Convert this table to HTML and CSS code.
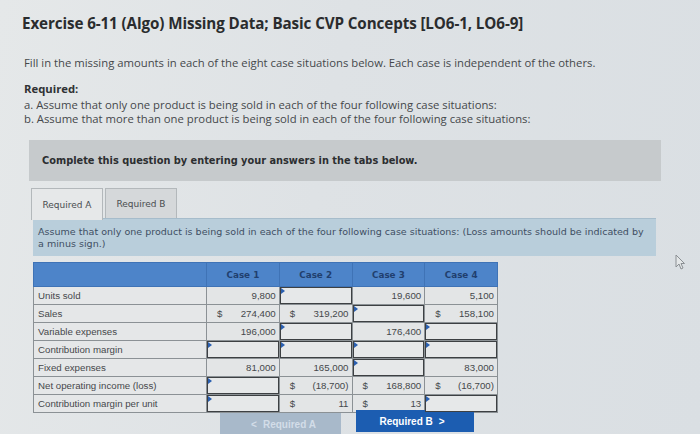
FILE: index.html
```
<!DOCTYPE html>
<html>
<head>
<meta charset="utf-8">
<link rel="stylesheet" href="styles.css">
</head>
<body>
<div class="page">
  <h1 class="title">Exercise 6-11 (Algo) Missing Data; Basic CVP Concepts [LO6-1, LO6-9]</h1>
  <p class="intro">Fill in the missing amounts in each of the eight case situations below. Each case is independent of the others.</p>
  <div class="req">
    <div class="req-h">Required:</div>
    <div class="req-l">a. Assume that only one product is being sold in each of the four following case situations:</div>
    <div class="req-l">b. Assume that more than one product is being sold in each of the four following case situations:</div>
  </div>
  <div class="banner">Complete this question by entering your answers in the tabs below.</div>
  <div class="tabs">
    <div class="tab active">Required A</div>
    <div class="tab">Required B</div>
  </div>
  <div class="instr">Assume that only one product is being sold in each of the four following case situations: (Loss amounts should be indicated by a minus sign.)</div>
  <table class="grid">
    <colgroup><col class="c-label"><col class="c-case"><col class="c-case"><col class="c-case"><col class="c-case"></colgroup>
    <thead>
      <tr><th></th><th>Case 1</th><th>Case 2</th><th>Case 3</th><th>Case 4</th></tr>
    </thead>
    <tbody>
      <tr><td class="lbl">Units sold</td><td class="val"><span class="num">9,800</span></td><td class="inp"><span class="box"></span></td><td class="val"><span class="num">19,600</span></td><td class="val"><span class="num">5,100</span></td></tr>
      <tr><td class="lbl">Sales</td><td class="val"><span class="cur">$</span><span class="num">274,400</span></td><td class="val"><span class="cur">$</span><span class="num">319,200</span></td><td class="inp"><span class="box"></span></td><td class="val"><span class="cur">$</span><span class="num">158,100</span></td></tr>
      <tr><td class="lbl">Variable expenses</td><td class="val"><span class="num">196,000</span></td><td class="inp"><span class="box"></span></td><td class="val"><span class="num">176,400</span></td><td class="inp"><span class="box"></span></td></tr>
      <tr><td class="lbl">Contribution margin</td><td class="inp"><span class="box"></span></td><td class="inp"><span class="box"></span></td><td class="inp"><span class="box"></span></td><td class="inp"><span class="box"></span></td></tr>
      <tr><td class="lbl">Fixed expenses</td><td class="val"><span class="num">81,000</span></td><td class="val"><span class="num">165,000</span></td><td class="inp"><span class="box"></span></td><td class="val"><span class="num">83,000</span></td></tr>
      <tr><td class="lbl">Net operating income (loss)</td><td class="inp"><span class="box"></span></td><td class="val"><span class="cur">$</span><span class="num">(18,700)</span></td><td class="val"><span class="cur">$</span><span class="num">168,800</span></td><td class="val"><span class="cur">$</span><span class="num">(16,700)</span></td></tr>
      <tr><td class="lbl">Contribution margin per unit</td><td class="inp"><span class="box"></span></td><td class="val"><span class="cur">$</span><span class="num">11</span></td><td class="val"><span class="cur">$</span><span class="num">13</span></td><td class="inp"><span class="box"></span></td></tr>
    </tbody>
  </table>
  <div class="nav">
    <div class="btn prev"><span class="chev">&lt;</span> Required A</div>
    <div class="btn next">Required B <span class="chev">&gt;</span></div>
  </div>
  <svg class="cursor" width="10" height="16" viewBox="0 0 10 16"><path d="M1 1 L1 13 L4 10 L6 15 L8 14 L6 9.5 L9.5 9.5 Z" fill="#e4e7e8" stroke="#8a8f93" stroke-width="1"/></svg>
</div>
</body>
</html>
```
FILE: styles.css
```
* { box-sizing: border-box; }
html, body { margin: 0; padding: 0; }
body {
  width: 700px;
  height: 434px;
  overflow: hidden;
  background: linear-gradient(100deg, #e5e8e9 0%, #dee2e5 45%, #dadfe3 100%);
  font-family: "Open Sans", "Liberation Sans", sans-serif;
  color: #3a3d40;
}
.page {
  position: relative;
  height: 434px;
  padding: 13px 0 0 22px;
}
.title {
  margin: 0;
  font-size: 15.2px;
  line-height: 20px;
  font-weight: 700;
  color: #2a2c2e;
  letter-spacing: -0.1px;
}
.intro {
  margin: 23px 0 0 2px;
  font-size: 11.3px;
  line-height: 14px;
  color: #45484b;
}
.req {
  margin: 12px 0 0 2px;
  font-size: 11.3px;
  color: #45484b;
}
.req-h {
  font-weight: 700;
  color: #303234;
  line-height: 14px;
  margin-bottom: 2px;
}
.req-l {
  line-height: 13.5px;
}
.banner {
  margin: 15px 0 0 7px;
  width: 632px;
  height: 41px;
  background: #c6cacc;
  padding: 0 0 0 13px;
  display: flex;
  align-items: center;
  font-family: "DejaVu Sans", sans-serif;
  font-weight: 700;
  font-size: 9.8px;
  color: #2c2e30;
}
.tabs {
  display: flex;
  gap: 2px;
  margin: 7px 0 0 9px;
}
.tab {
  width: 72px;
  height: 30px;
  border: 1px solid #b3b8bb;
  border-bottom: none;
  background: #d5d8da;
  font-family: "DejaVu Sans", sans-serif;
  font-size: 9px;
  color: #4a4d50;
  display: flex;
  align-items: center;
  justify-content: center;
}
.tab.active {
  background: #e6e8e9;
  height: 32px;
  margin-bottom: -2px;
}
.instr {
  margin: 0 0 0 11px;
  width: 623px;
  background: #b9cedb;
  border-top: 1px solid #a6bccb;
  padding: 7px 10px 7px 5px;
  font-family: "DejaVu Sans", sans-serif;
  font-size: 9.55px;
  line-height: 11.5px;
  color: #3f4f63;
}
.grid {
  margin: 6px 0 0 11px;
  border-collapse: collapse;
  table-layout: fixed;
  width: 464px;
  font-family: "Liberation Sans", Arial, sans-serif;
  font-size: 9.7px;
  color: #45484b;
}
.c-label { width: 173px; }
.c-case { width: 72.75px; }
.grid th {
  height: 24px;
  background: #4d84c9;
  border: 1px solid #3f73b6;
  font-family: "DejaVu Sans", sans-serif;
  font-weight: 700;
  font-size: 8.8px;
  color: #213f6e;
  text-align: center;
  padding: 0;
}
.grid td {
  height: 17.85px;
  border: 1px solid #8b9195;
  background: #e3e5e6;
  padding: 0;
}
.grid td.lbl {
  padding-left: 4px;
  background: #e5e7e8;
}
.grid td.val {
  padding: 0 3px 0 10px;
}
.val {
  white-space: nowrap;
}
.val .cur { float: left; }
.val .num { float: right; }
.grid td.inp {
  padding: 0;
}
.box {
  position: relative;
  display: block;
  height: 17px;
  border: 1.5px solid #3d4043;
  background: #e6e8e9;
}
.box::before {
  content: "";
  position: absolute;
  left: 0;
  top: 0;
  border-top: 3px solid transparent;
  border-bottom: 3px solid transparent;
  border-left: 4px solid #2a5fb0;
}
.nav {
  display: flex;
  align-items: flex-start;
  gap: 15px;
  margin: -3px 0 0 198px;
}
.btn {
  height: 22px;
  display: flex;
  align-items: center;
  justify-content: center;
  font-family: "Liberation Sans", Arial, sans-serif;
  font-weight: 700;
  font-size: 10px;
}
.btn.prev {
  width: 121px;
  background: #a8b9ca;
  color: #d3dde8;
  margin-top: 3px;
}
.btn.next {
  width: 118px;
  background: #1c5db1;
  color: #ffffff;
}
.chev { margin: 0 6px; }
.cursor {
  position: absolute;
  left: 675px;
  top: 254px;
}
```
